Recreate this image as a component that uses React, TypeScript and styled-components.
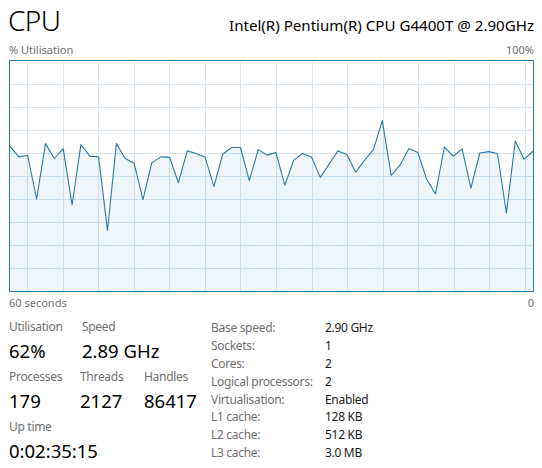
import styled, { createGlobalStyle } from 'styled-components';

const GlobalStyle = createGlobalStyle`
    html, body {
        margin: 0;
        padding: 0;
        background: #ffffff;
    }
    body {
        font-family: 'Noto Sans', 'Open Sans', sans-serif;
        color: #000000;
    }
`;

// samples over the last 60 seconds, % utilisation
const samples = [
    62.9, 58.3, 58.9, 40.0, 64.1, 57.6, 61.9, 37.5, 63.7, 58.6,
    58.3, 26.3, 64.1, 57.6, 55.5, 39.7, 55.7, 58.3, 58.1, 47.1,
    60.9, 59.8, 58.3, 45.4, 59.5, 62.4, 62.4, 48.0, 61.5, 59.1,
    60.2, 46.0, 56.9, 59.8, 58.3, 49.4, 55.2, 60.9, 59.4, 51.6,
    56.9, 61.5, 74.1, 50.3, 54.7, 61.9, 60.2, 48.6, 42.2, 62.6,
    58.6, 61.8, 44.7, 60.0, 60.6, 59.8, 33.9, 65.2, 57.3, 60.8,
];

const GRAPH_W = 523;
const GRAPH_H = 230;

const details = [
    ['Base speed:', '2.90 GHz'],
    ['Sockets:', '1'],
    ['Cores:', '2'],
    ['Logical processors:', '2'],
    ['Virtualisation:', 'Enabled'],
    ['L1 cache:', '128 KB'],
    ['L2 cache:', '512 KB'],
    ['L3 cache:', '3.0 MB'],
];

const UsageGraph = () => {
    const step = GRAPH_W / (samples.length - 1);
    const pts = samples.map((v, i) => `${(i * step).toFixed(1)},${(GRAPH_H - (v / 100) * GRAPH_H).toFixed(1)}`);
    const line = pts.join(' ');
    const area = `0,${GRAPH_H} ${line} ${GRAPH_W},${GRAPH_H}`;

    const vLines: number[] = [];
    for (let x = 17; x < GRAPH_W; x += 35.57) vLines.push(Math.round(x) + 0.5);
    const hLines: number[] = [];
    for (let k = 1; k < 10; k++) hLines.push(Math.round(k * 23) + 0.5);

    return (
        <GraphBox>
            <svg width={GRAPH_W} height={GRAPH_H} viewBox={`0 0 ${GRAPH_W} ${GRAPH_H}`}>
                {vLines.map((x) => (
                    <line key={`v${x}`} x1={x} x2={x} y1={0} y2={GRAPH_H} stroke='#d9e5ef' strokeWidth={1} />
                ))}
                {hLines.map((y) => (
                    <line key={`h${y}`} x1={0} x2={GRAPH_W} y1={y} y2={y} stroke='#d9e5ef' strokeWidth={1} />
                ))}
                <polygon points={area} fill='rgba(17, 125, 187, 0.07)' />
                <polyline points={line} fill='none' stroke='#2b7aa5' strokeWidth={1.1} strokeLinejoin='round' />
            </svg>
        </GraphBox>
    );
};

const App = () => (
    <Page>
        <GlobalStyle />
        <Header>
            <Title>CPU</Title>
            <CpuName>Intel(R) Pentium(R) CPU G4400T @ 2.90GHz</CpuName>
        </Header>
        <AxisRow>
            <span>% Utilisation</span>
            <span>100%</span>
        </AxisRow>
        <UsageGraph />
        <AxisRow $below>
            <span>60 seconds</span>
            <span>0</span>
        </AxisRow>
        <Stats>
            <LiveStats>
                <StatRow>
                    <Stat $width={73}>
                        <StatLabel>Utilisation</StatLabel>
                        <StatValue>62%</StatValue>
                    </Stat>
                    <Stat>
                        <StatLabel>Speed</StatLabel>
                        <StatValue>2.89 GHz</StatValue>
                    </Stat>
                </StatRow>
                <StatRow>
                    <Stat $width={71}>
                        <StatLabel>Processes</StatLabel>
                        <StatValue>179</StatValue>
                    </Stat>
                    <Stat $width={64}>
                        <StatLabel>Threads</StatLabel>
                        <StatValue>2127</StatValue>
                    </Stat>
                    <Stat>
                        <StatLabel>Handles</StatLabel>
                        <StatValue>86417</StatValue>
                    </Stat>
                </StatRow>
                <StatRow>
                    <Stat>
                        <StatLabel>Up time</StatLabel>
                        <StatValue>0:02:35:15</StatValue>
                    </Stat>
                </StatRow>
            </LiveStats>
            <DetailTable>
                {details.map(([label, value]) => (
                    <DetailRow key={label}>
                        <DetailLabel>{label}</DetailLabel>
                        <DetailValue>{value}</DetailValue>
                    </DetailRow>
                ))}
            </DetailTable>
        </Stats>
    </Page>
);

const Page = styled.div`
    width: 542px;
    height: 468px;
    box-sizing: border-box;
    padding: 0 8px 0 9px;
    display: flex;
    flex-direction: column;
    overflow: hidden;
`;

const Header = styled.div`
    display: flex;
    justify-content: space-between;
    align-items: baseline;
    height: 40px;
`;

const Title = styled.div`
    font-size: 28px;
    font-weight: 300;
    line-height: 40px;
    letter-spacing: -0.6px;
    margin-left: -1px;
`;

const CpuName = styled.div`
    font-size: 15.1px;
    line-height: 40px;
`;

const AxisRow = styled.div<{ $below?: boolean }>`
    display: flex;
    justify-content: space-between;
    font-size: 11px;
    color: #6f6f6f;
    height: 20px;
    line-height: 20px;
    margin-top: ${({ $below }) => ($below ? '1px' : '0')};
`;

const GraphBox = styled.div`
    width: 525px;
    height: 232px;
    box-sizing: border-box;
    border: 1px solid #1f7fae;
    background: #ffffff;

    & svg {
        display: block;
    }
`;

const Stats = styled.div`
    display: flex;
    margin-top: 4px;
`;

const LiveStats = styled.div`
    width: 202px;
    display: flex;
    flex-direction: column;
    gap: 3px;
`;

const StatRow = styled.div`
    display: flex;
`;

const Stat = styled.div<{ $width?: number }>`
    width: ${({ $width }) => ($width ? `${$width}px` : 'auto')};
    display: flex;
    flex-direction: column;
`;

const StatLabel = styled.div`
    font-size: 12px;
    letter-spacing: -0.3px;
    color: #6f6f6f;
    line-height: 20px;
`;

const StatValue = styled.div`
    font-size: 18.5px;
    line-height: 27px;
`;

const DetailTable = styled.div`
    display: flex;
    flex-direction: column;
    padding-top: 2px;
`;

const DetailRow = styled.div`
    display: grid;
    grid-template-columns: 114px auto;
    height: 17.9px;
    line-height: 17.9px;
    font-size: 12px;
    letter-spacing: -0.3px;
`;

const DetailLabel = styled.span`
    color: #6f6f6f;
`;

const DetailValue = styled.span`
    color: #1a1a1a;
`;

export default App;
